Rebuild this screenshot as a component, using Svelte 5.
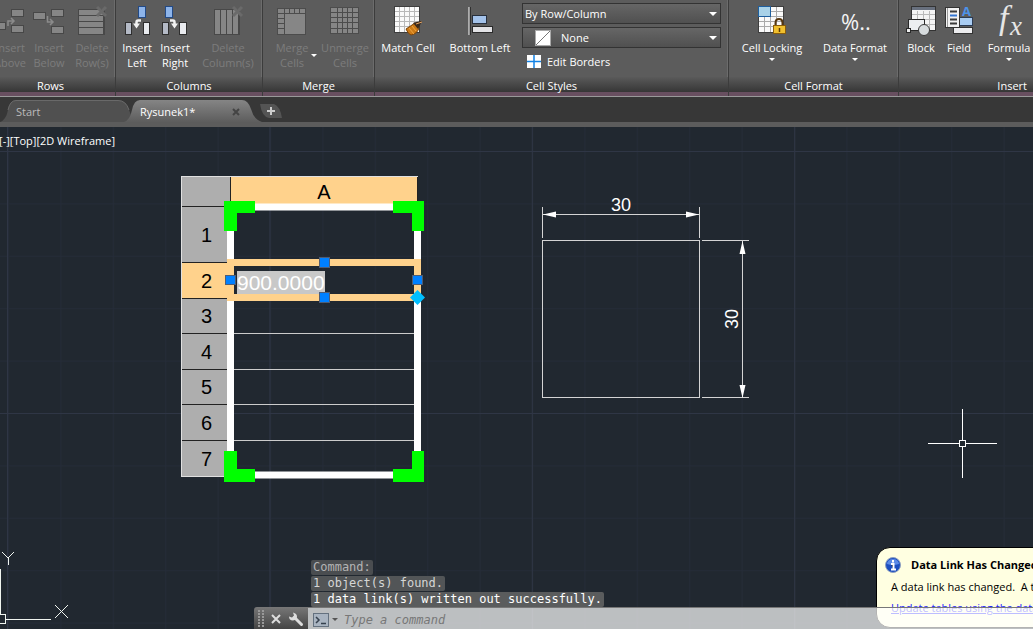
<script>
  const panels = [
    {
      name: 'Rows',
      cls: 'rows',
      tools: [
        { icon: 'rowAbove', lines: ['Insert', 'Above'], width: 38, disabled: true },
        { icon: 'rowBelow', lines: ['Insert', 'Below'], width: 40, disabled: true },
        { icon: 'rowDelete', lines: ['Delete', 'Row(s)'], width: 46, disabled: true }
      ]
    },
    {
      name: 'Columns',
      cls: 'columns',
      tools: [
        { icon: 'colLeft', lines: ['Insert', 'Left'], width: 38 },
        { icon: 'colRight', lines: ['Insert', 'Right'], width: 38 },
        { icon: 'colDelete', lines: ['Delete', 'Column(s)'], width: 68, disabled: true }
      ]
    },
    {
      name: 'Merge',
      cls: 'merge',
      tools: [
        { icon: 'merge', lines: ['Merge', 'Cells'], width: 54, disabled: true, sideArrow: true },
        { icon: 'unmerge', lines: ['Unmerge', 'Cells'], width: 52, disabled: true }
      ]
    },
    {
      name: 'Cell Styles',
      cls: 'styles',
      tools: [
        { icon: 'match', lines: ['Match Cell'], width: 62 },
        { icon: 'align', lines: ['Bottom Left'], width: 82, arrow: true }
      ]
    },
    {
      name: 'Cell Format',
      cls: 'format',
      tools: [
        { icon: 'lock', lines: ['Cell Locking'], width: 82, arrow: true },
        { icon: 'percent', lines: ['Data Format'], width: 84, arrow: true }
      ]
    },
    {
      name: 'Insert',
      cls: 'insert',
      tools: [
        { icon: 'block', lines: ['Block'], width: 38 },
        { icon: 'field', lines: ['Field'], width: 38 },
        { icon: 'formula', lines: ['Formula'], width: 62, arrow: true }
      ]
    }
  ];

  const history = [
    'Command:',
    '1 object(s) found.',
    '1 data link(s) written out successfully.'
  ];

  const rows = [1, 2, 3, 4, 5, 6, 7];

  let cellValue = $state('900.0000');
  let command = $state('');
</script>

{#snippet icon(name)}
  <svg class="icon" viewBox="0 0 32 32" aria-hidden="true">
    {#if name === 'rowAbove'}
      <g fill="#868686" stroke="#474747">
        <rect x="17.5" y="5.5" width="12" height="7" />
        <rect x="17.5" y="21.5" width="12" height="7" />
        <rect x="-.5" y="18.5" width="12" height="7" />
      </g>
      <path d="M14 22v-5h5M17 14l3 3-3 3" fill="none" stroke="#8b8b8b" stroke-width="1.5" />
    {:else if name === 'rowBelow'}
      <g fill="#868686" stroke="#474747">
        <rect x="0.5" y="8.5" width="12" height="7" />
        <rect x="18.5" y="5.5" width="12" height="7" />
        <rect x="18.5" y="22.5" width="12" height="7" />
      </g>
      <path d="M14.500 12v6h5M17 15l3 3-3 3" fill="none" stroke="#8b8b8b" stroke-width="1.500" />
    {:else if name === 'rowDelete'}
      <rect x="2" y="5" width="27" height="26" fill="#484848" />
      <path d="M3 6h24v5H3zM3 12h24v5H3zM3 18h24v5H3zM3 24h24v6H3z" fill="#868686" />
      <path d="M21 3l9 9M30 3l-9 9" stroke="#6a6a6a" stroke-width="3" />
    {:else if name === 'colLeft'}
      <rect x="17.5" y="2.500" width="7" height="11" fill="#8db4ea" stroke="#234a86" />
      <rect x="4.500" y="18.500" width="6" height="12" fill="#b4bac6" stroke="#2e2e2e" />
      <rect x="22.500" y="18.500" width="6" height="12" fill="#e9ebef" stroke="#2e2e2e" />
      <path d="M20 16.500h-3q-1.500 0-1.500 2v2" fill="none" stroke="#f2f2f2" stroke-width="2.500" />
      <path d="M12 19.500h7l-3.500 5z" fill="#f2f2f2" />
    {:else if name === 'colRight'}
      <rect x="6.500" y="2.500" width="7" height="11" fill="#8db4ea" stroke="#234a86" />
      <rect x="3.500" y="18.500" width="6" height="12" fill="#b4bac6" stroke="#2e2e2e" />
      <rect x="20.500" y="18.500" width="7" height="12" fill="#e9ebef" stroke="#2e2e2e" />
      <path d="M11 16.500h3q1.500 0 1.500 2v2" fill="none" stroke="#f2f2f2" stroke-width="2.500" />
      <path d="M12 19.500h7l-3.500 5z" fill="#f2f2f2" />
    {:else if name === 'colDelete'}
      <rect x="2" y="5" width="26" height="26" fill="#484848" />
      <path d="M3 6h5v24H3zM9 6h5v24H9zM15 6h5v24h-5zM21 6h5v24h-5z" fill="#868686" />
      <path d="M21 3l9 9M30 3l-9 9" stroke="#6a6a6a" stroke-width="3" />
    {:else if name === 'merge'}
      <rect x="1.500" y="4.500" width="28" height="26" fill="#868686" stroke="#4c4c4c" />
      <path d="M2 9.500h27M8.500 5v25M13.500 5v4M18.500 5v4M23.500 5v4M2 14.500h6M2 19.500h6M2 24.500h6" stroke="#4c4c4c" />
    {:else if name === 'unmerge'}
      <rect x="1.500" y="3.500" width="28" height="26" fill="#868686" stroke="#4c4c4c" />
      <path d="M2 8.500h27M2 13.500h27M2 18.500h27M2 24.500h27M8.500 4v25M13.500 4v25M18.500 4v25M23.500 4v25" stroke="#4c4c4c" />
    {:else if name === 'match'}
      <rect x="2.500" y="2.500" width="25" height="26" fill="#fafafa" stroke="#3e3e3e" />
      <path d="M3 7.500h24M3 12.500h24M3 17.500h24M3 22.500h24M7.500 3v25M12.500 3v25M17.500 3v25M22.500 3v25" stroke="#b8b8b8" />
      <path d="M14 25l9-6 4 5q-2 6-8 7-3-1-5-6z" fill="#cc7a16" stroke="#7d4408" />
      <path d="M17 24l5 6M20 22l4 5" stroke="#f0a640" />
      <path d="M21 19l3-1 6-1-2 4-2 4z" fill="#3c2a1b" />
      <path d="M24 20l6-2" stroke="#e0a060" />
    {:else if name === 'align'}
      <path d="M6 3v28" stroke="#303030" stroke-width="2" />
      <path d="M5 3v28" stroke="#fff" />
      <rect x="8.500" y="11.500" width="14" height="8" fill="#a3c2ea" stroke="#272f3c" />
      <rect x="8.500" y="22.500" width="20" height="6" fill="#e3e3e6" stroke="#2a2a2a" />
    {:else if name === 'lock'}
      <rect x="2.500" y="2.500" width="25" height="26" fill="#fafafa" stroke="#3e3e3e" />
      <path d="M3 12.500h24M3 17.500h24M3 22.500h24M8.500 3v25M14.500 3v25M20.500 3v25M3 7.500h24" stroke="#aaa" />
      <rect x="2.500" y="2.500" width="12" height="10" fill="#a9d2e8" stroke="#1f5f9e" />
      <path d="M19.500 23v-4q0-4 3.500-4t3.500 4v4" fill="none" stroke="#573710" stroke-width="2" />
      <rect x="17.500" y="21.500" width="12" height="8" fill="#efbf2e" stroke="#8a5d0b" />
      <path d="M23.500 24v4" stroke="#5d3c05" stroke-width="1.500" />
    {:else if name === 'percent'}
      <text x="2" y="26" font-family="Open Sans, Noto Sans, sans-serif" font-size="22" fill="#f3f3f3">%..</text>
    {:else if name === 'block'}
      <rect x="6.500" y="2.500" width="24" height="24" fill="#f4f4f4" stroke="#333" />
      <path d="M7 4.500h23" stroke="#68707e" stroke-width="3" />
      <path d="M7 10.500h23M7 15.500h23M7 20.500h23M12.500 7v19M18.500 7v19M24.500 7v19" stroke="#b9b9b9" />
      <rect x="3.500" y="15.500" width="16" height="11" fill="#eceef0" stroke="#292929" />
      <rect x="1.500" y="24.500" width="4" height="4" fill="#eee" stroke="#292929" />
      <circle cx="19" cy="26" r="5.500" fill="#d7dbdd" stroke="#3a3a3a" />
    {:else if name === 'field'}
      <rect x="12.500" y="13.500" width="17" height="8" fill="#a9ccf2" stroke="#2b3b55" />
      <rect x="10.500" y="23.500" width="19" height="6" fill="#ececee" stroke="#333" />
      <rect x="2.500" y="3.500" width="14" height="20" fill="#f2f2f2" stroke="#333" />
      <path d="M4.500 4v19" stroke="#999" />
      <path d="M7 7.500h7M7 15.500h7M7 19.500h7" stroke="#3a3a3a" stroke-width="2" />
      <path d="M7 11.500h7" stroke="#3577d4" stroke-width="2" />
      <text x="19" y="12" font-family="Open Sans, sans-serif" font-size="13" font-weight="700" fill="#4c92ea">A</text>
    {:else if name === 'formula'}
      <text x="6" y="25" font-family="Liberation Serif, serif" font-style="italic" font-size="34" fill="#e6e6e6">f</text>
      <text x="17" y="31" font-family="Liberation Serif, serif" font-style="italic" font-size="27" fill="#e6e6e6">x</text>
    {/if}
  </svg>
{/snippet}

<div class="app">
  <header class="ribbon">
    {#each panels as panel}
      <section class="panel {panel.cls}">
        <div class="panel-body">
          {#each panel.tools as tool}
            <button class="tool" disabled={tool.disabled} style:width="{tool.width}px">
              {@render icon(tool.icon)}
              {#each tool.lines as line}
                <span>{line}</span>
              {/each}
              {#if tool.arrow}<i class="arrow"></i>{/if}
              {#if tool.sideArrow}<i class="arrow side"></i>{/if}
            </button>
          {/each}
          {#if panel.name === 'Cell Styles'}
            <div class="style-controls">
              <div class="combo">
                <select aria-label="Table cell style">
                  <option>By Row/Column</option>
                </select>
                <i class="arrow big"></i>
              </div>
              <div class="combo fill">
                <select aria-label="Cell background">
                  <option>None</option>
                </select>
                <svg class="swatch" viewBox="0 0 16 16" aria-hidden="true">
                  <rect x=".5" y=".5" width="15" height="15" fill="#fff" stroke="#a9a9a9" />
                  <path d="M1 15L15 1" stroke="#777" />
                </svg>
                <i class="arrow big"></i>
              </div>
              <button class="borders">
                <svg viewBox="0 0 14 13" width="14" height="13" aria-hidden="true">
                  <rect width="14" height="13" fill="#fff" />
                  <path d="M7 0v13M0 6.500h14" stroke="#1383e6" stroke-width="1.500" />
                </svg>
                Edit Borders
              </button>
            </div>
          {/if}
        </div>
        <h2>{panel.name}</h2>
      </section>
    {/each}
  </header>

  <nav class="tabs">
    <button class="tab">
      <svg viewBox="0 0 124 22" preserveAspectRatio="none" aria-hidden="true">
        <path d="M-6 22Q0 20 2 10 4 0 10 0H112Q120 0 123 10L128 22z" fill="#505050" />
        <path d="M2 10Q4 .5 10 .5H112Q120 .5 123 10" fill="none" stroke="#696969" />
      </svg>
      <span>Start</span>
    </button>
    <button class="tab active">
      <svg viewBox="0 0 124 22" preserveAspectRatio="none" aria-hidden="true">
        <defs>
          <linearGradient id="tabFill" x2="0" y2="1">
            <stop offset="0" stop-color="#858585" />
            <stop offset="1" stop-color="#5d5d5d" />
          </linearGradient>
        </defs>
        <path d="M-6 22Q0 20 2 10 4 0 10 0H112Q118 0 121 9 124 20 132 22z" fill="url(#tabFill)" />
      </svg>
      <span>Rysunek1*</span>
      <svg class="close" viewBox="0 0 8 8" aria-hidden="true">
        <path d="M1 1l6 6M7 1L1 7" stroke="#444" stroke-width="2" />
      </svg>
    </button>
    <button class="new-tab" aria-label="New drawing">
      <svg viewBox="0 0 22 15" aria-hidden="true">
        <path d="M0 0H14Q20 2 22 14H9Q2 13 0 0z" fill="#545454" />
        <path d="M11 3v8M7 7h8" stroke="#ccc" stroke-width="2" />
      </svg>
    </button>
  </nav>

  <main class="canvas">
    <svg class="drawing" aria-hidden="true">
      <defs>
        <pattern id="minor" x="8" y="24" width="52.400" height="52.400" patternUnits="userSpaceOnUse">
          <path d="M.5 0V53M0 .5H53" stroke="#252c38" />
        </pattern>
        <pattern id="major" x="7" y="24" width="262.400" height="262" patternUnits="userSpaceOnUse">
          <path d="M.5 0V262M0 .5H263" stroke="#2f3645" />
        </pattern>
      </defs>
      <rect width="100%" height="100%" fill="url(#minor)" />
      <rect width="100%" height="100%" fill="url(#major)" />

      <g fill="none" stroke="#d4d4d4">
        <rect x="542.500" y="113.500" width="157" height="157" />
        <path d="M542.500 80v31M699.500 80v31M543 87.500H699" />
        <path d="M702 113.500h47M702 270.500h47M742.500 114V271" />
      </g>
      <g fill="#fff">
        <path d="M543 87.500l13-3v6zM699 87.500l-13-3v6z" />
        <path d="M742.500 114l-3 13h6zM742.500 271l-3-13h6z" />
        <text x="621" y="84" text-anchor="middle">30</text>
        <text transform="translate(738 192) rotate(-90)" text-anchor="middle">30</text>
      </g>

      <path d="M928 316.500h31M966 316.500h31M962.500 282v31M962.500 320v31" stroke="#fff" />
      <rect x="959.500" y="313.500" width="6" height="6" fill="none" stroke="#fff" />
    </svg>

    <div class="view-label">
      <button>[-]</button><button>[Top]</button><button>[2D Wireframe]</button>
    </div>

    <div class="sheet">
      <table>
        <thead>
          <tr><th></th><th class="picked" scope="col">A</th></tr>
        </thead>
        <tbody>
          {#each rows as row}
            <tr>
              <th scope="row" class:picked={row === 2}>{row}</th>
              <td>
                {#if row === 2}
                  <input aria-label="Cell A2" bind:value={cellValue} />
                {/if}
              </td>
            </tr>
          {/each}
        </tbody>
      </table>
      <svg class="grips" viewBox="0 0 250 310" aria-hidden="true">
        <rect x="49.500" y="31" width="187" height="268" fill="none" stroke="#fff" stroke-width="7" />
        <rect x="49.500" y="86.500" width="187" height="35" fill="none" stroke="#ffd28c" stroke-width="7" />
        <path d="M43 55V25h31v12H56v18zM212 25h31v30h-12V37h-19zM43 275v31h31v-13H56v-18zM243 275v31h-31v-13h19v-18z" fill="#0f0" />
        <g fill="#0080ff" stroke="#4f5d75">
          <rect x="138.500" y="81.500" width="10" height="10" />
          <rect x="138.500" y="116.500" width="10" height="10" />
          <rect x="44.500" y="99.500" width="10" height="9" />
          <rect x="231.500" y="99.500" width="10" height="9" />
        </g>
        <path d="M236.500 114l7.500 7.500-7.500 7.500-7.500-7.500z" fill="#00bfff" />
      </svg>
    </div>

    <svg class="ucs" viewBox="0 0 80 80" aria-hidden="true">
      <g fill="none" stroke="#f0f5f0">
        <path d="M.5 20v45M6 70.500h45" />
        <rect x="-3.500" y="65.500" width="9" height="9" />
        <path d="M2 3l6 6 6-6M8.500 9v7M55 56l13 13M68 56L55 69" />
      </g>
    </svg>

    <aside class="balloon">
      <h3>
        <svg viewBox="0 0 16 16" aria-hidden="true">
          <circle cx="8" cy="8" r="7.500" fill="#1c4fc0" stroke="#8fa0c0" />
          <path d="M2 7a6 5 0 0 1 12 0q-6 2-12 0z" fill="#5d8be6" />
          <path d="M8 3v2.500M6 7h2.500v5M6 12.500h5" stroke="#fff" stroke-width="2" />
        </svg>
        Data Link Has Changed
      </h3>
      <p>A data link has changed.&nbsp; A table may need</p>
      <a href="#update">Update tables using the data link</a>
    </aside>

    <div class="console">
      <div class="history">
        {#each history as line, i}
          <div class:old={i === 0} class:mid={i === 1}>{line}</div>
        {/each}
      </div>
      <div class="command-bar">
        <div class="handle">
          <svg class="dots" viewBox="0 0 6 18" aria-hidden="true">
            <path d="M1 0v18M5 0v18" stroke="#999" stroke-width="2" stroke-dasharray="2 1" />
          </svg>
          <button aria-label="Close">
            <svg viewBox="0 0 16 16" aria-hidden="true">
              <path d="M4 4l8 8M12 4l-8 8" stroke="#ddd" stroke-width="2" />
            </svg>
          </button>
          <button aria-label="Customize">
            <svg viewBox="0 0 16 16" aria-hidden="true">
              <path d="M6.500 6.500l7 7" stroke="#ddd" stroke-width="3" stroke-linecap="round" />
              <path d="M5 1.500l1 3-2 2-3-1q0 4 4 4 4-1 4-4 0-3-4-4z" fill="#ddd" />
            </svg>
          </button>
        </div>
        <label class="prompt">
          <svg viewBox="0 0 16 14" aria-hidden="true">
            <rect x=".5" y=".5" width="15" height="13" fill="#a9b4c1" stroke="#64717f" />
            <path d="M3 4l3 3-3 3M8 10.500h5" fill="none" stroke="#36414e" stroke-width="1.500" />
          </svg>
          <i class="arrow dark"></i>
          <input bind:value={command} placeholder="Type a command" aria-label="Command line" />
        </label>
      </div>
    </div>
  </main>
</div>

<style>
  :global(body) {
    background: #212830;
  }

  .app {
    height: 100vh;
    display: flex;
    flex-direction: column;
    overflow: hidden;
    font-family: 'Open Sans', 'Noto Sans', sans-serif;
    font-size: 12px;
    color: #fff;
  }

  button,
  input,
  select {
    font: inherit;
    color: inherit;
    background: none;
    border: 0;
    padding: 0;
    margin: 0;
  }

  /* ribbon */
  .ribbon {
    display: grid;
    grid-template-columns: 116px 147px 112px 354px 170px 1fr;
    flex: none;
    background: #5c5c5c;
    border-bottom: 1px solid #999;
  }

  .panel {
    display: flex;
    flex-direction: column;
    min-width: 0;
    overflow: hidden;
    border-right: 1px solid #3c3c3c;
    box-shadow: inset -1px 0 #6c6c6c;
  }

  .panel:last-child {
    border-right: 0;
    box-shadow: none;
  }

  .panel-body {
    display: flex;
    height: 77px;
    padding: 0 2px;
  }

  .rows .panel-body {
    justify-content: flex-end;
    padding: 0;
  }

  .insert .panel-body {
    padding: 0 3px;
  }

  .panel h2 {
    margin: 0;
    height: 15px;
    line-height: 17px;
    font-size: 11px;
    font-weight: 400;
    text-align: center;
    background: linear-gradient(#5a5a5a, #363636);
    border-bottom: 4px solid #684f60;
  }

  .rows h2 {
    padding-right: 14px;
  }

  .insert h2 {
    padding-right: 6px;
    text-align: right;
  }

  .tool {
    position: relative;
    flex: none;
    display: flex;
    flex-direction: column;
    align-items: center;
    padding-top: 4px;
    line-height: 15px;
    font-size: 11px;
    white-space: nowrap;
  }

  .tool:disabled {
    color: #7c7c7c;
  }

  .icon {
    width: 32px;
    height: 32px;
    margin-bottom: 4px;
    overflow: visible;
  }

  .arrow {
    border: 3px solid transparent;
    border-top-color: #fff;
    border-bottom: 0;
    margin-top: 3px;
  }

  .arrow.side {
    position: absolute;
    right: 2px;
    top: 51px;
  }

  .arrow.big {
    position: absolute;
    right: 4px;
    top: 6px;
    border-width: 4px 4px 0;
  }

  .arrow.dark {
    border-top-color: #555;
    margin: 0;
  }

  .style-controls {
    display: flex;
    flex-direction: column;
    align-items: flex-start;
    flex: 1;
    padding: 3px 5px 0 1px;
    gap: 3px;
  }

  .combo {
    position: relative;
    width: 100%;
    height: 21px;
  }

  .combo select {
    appearance: none;
    width: 100%;
    height: 100%;
    padding-left: 2px;
    font-size: 11px;
    border: 1px solid #333;
    background: linear-gradient(#666, #505050);
  }

  .combo.fill select {
    padding-left: 38px;
  }

  .swatch {
    position: absolute;
    left: 13px;
    top: 3px;
    width: 16px;
    height: 16px;
  }

  .borders {
    display: flex;
    align-items: center;
    gap: 6px;
    height: 20px;
    padding-left: 5px;
    font-size: 11px;
  }

  /* file tabs */
  .tabs {
    display: flex;
    flex: none;
    padding: 3px 6px 0;
    background: #373737;
    border-bottom: 5px solid #5c5c5c;
  }

  .tab {
    position: relative;
    width: 124px;
    height: 22px;
    padding-left: 10px;
    text-align: left;
    font-size: 11px;
    color: #bbb;
  }

  .tab > svg:first-child {
    position: absolute;
    inset: 0;
    width: 100%;
    height: 100%;
    overflow: visible;
  }

  .tab span {
    position: relative;
  }

  .tab.active {
    color: #fff;
  }

  .tab .close {
    position: absolute;
    right: 14px;
    top: 8px;
    width: 8px;
    height: 8px;
  }

  .new-tab {
    margin: 4px 0 0 6px;
    height: 15px;
  }

  .new-tab svg {
    display: block;
    width: 22px;
    height: 15px;
  }

  /* model space */
  .canvas {
    position: relative;
    flex: 1;
    min-height: 0;
    overflow: hidden;
    background: #212830;
  }

  .drawing {
    position: absolute;
    width: 100%;
    height: 100%;
    font: 18px 'Liberation Sans', sans-serif;
  }

  .view-label {
    position: relative;
    display: flex;
    justify-content: flex-end;
    width: 115px;
    padding-top: 6px;
    line-height: 16px;
    font-size: 11px;
    overflow: hidden;
  }

  .view-label button {
    flex: none;
  }

  .sheet {
    position: absolute;
    left: 181px;
    top: 49px;
    font-family: 'Liberation Sans', sans-serif;
    font-size: 20px;
  }

  .sheet table {
    table-layout: fixed;
    width: 237px;
    border-collapse: separate;
    border-spacing: 0;
    border: 1px solid #e0e0e0;
    border-right-width: 0;
  }

  .sheet th:first-child {
    width: 49px;
  }

  .sheet th,
  .sheet td {
    box-sizing: border-box;
    height: 36px;
    padding: 0;
    font-weight: 400;
    line-height: 22px;
  }

  .sheet th {
    background: #aeaeae;
    color: #000;
    border-bottom: 1px solid #222;
  }

  .sheet tr:nth-child(odd) th {
    height: 35px;
  }

  .sheet tr:nth-child(odd) td {
    height: 35px;
  }

  .sheet thead tr:first-child th {
    height: 30px;
    border-right: 1px solid #222;
  }

  .sheet tbody tr:first-child th {
    height: 56px;
  }

  .sheet th.picked {
    background: #ffd28c;
  }

  .sheet td {
    border-bottom: 1px solid #ccc;
  }

  .sheet tbody tr:last-child th,
  .sheet tbody tr:last-child td {
    border-bottom: 0;
  }

  .sheet input {
    display: block;
    width: 88px;
    height: 23px;
    margin: 4px 0 0 6px;
    font-size: 21px;
    color: #fff;
    background: #c8c8c8;
  }

  .grips {
    position: absolute;
    left: 0;
    top: 0;
    width: 250px;
    height: 310px;
    pointer-events: none;
  }

  .ucs {
    position: absolute;
    left: 0;
    bottom: 0;
    width: 80px;
    height: 80px;
  }

  .balloon {
    position: absolute;
    right: -64px;
    bottom: 1px;
    box-sizing: border-box;
    width: 221px;
    height: 81px;
    padding: 8px 0 0 14px;
    color: #000;
    background: #ffffe1;
    border: 1px solid #000;
    border-radius: 14px;
    white-space: nowrap;
    overflow: hidden;
    font-size: 11px;
  }

  .balloon h3 {
    display: flex;
    align-items: center;
    gap: 10px;
    margin: 0 0 0 -6px;
    font-size: 11px;
    line-height: 18px;
  }

  .balloon h3 svg {
    width: 16px;
    height: 16px;
  }

  .balloon p {
    margin: 5px 0;
    line-height: 16px;
  }

  .balloon a {
    color: #22f;
    line-height: 16px;
  }

  /* command line */
  .console {
    position: absolute;
    left: 254px;
    right: 0;
    bottom: 0;
    font-family: 'DejaVu Sans Mono', 'Liberation Mono', monospace;
  }

  .history {
    display: flex;
    flex-direction: column;
    align-items: flex-start;
    gap: 1px;
    padding-left: 57px;
  }

  .history div {
    padding: 0 2px;
    line-height: 15px;
    background: #5a5c5d;
    border-radius: 2px;
  }

  .history .old {
    color: #b4b4b4;
    background: #4a4d50;
  }

  .history .mid {
    color: #d5d5d5;
    background: #525557;
  }

  .command-bar {
    display: flex;
    height: 22px;
  }

  .handle {
    display: flex;
    align-items: center;
    gap: 4px;
    width: 50px;
    padding: 2px 0 0 4px;
    background: linear-gradient(#777, #444);
    border-radius: 3px 0 0 0;
  }

  .dots {
    width: 6px;
    height: 18px;
  }

  .handle button,
  .handle button svg {
    display: block;
    width: 16px;
    height: 16px;
  }

  .prompt {
    display: flex;
    align-items: center;
    flex: 1;
    gap: 3px;
    padding: 2px 0 0 5px;
    background: rgba(255, 255, 255, 0.7);
    border-top: 1px solid #777;
  }

  .prompt svg {
    width: 16px;
    height: 14px;
  }

  .prompt input {
    flex: 1;
    margin-left: 3px;
    color: #222;
    outline: none;
  }

  .prompt input::placeholder {
    color: #777;
    font-style: italic;
  }
</style>
